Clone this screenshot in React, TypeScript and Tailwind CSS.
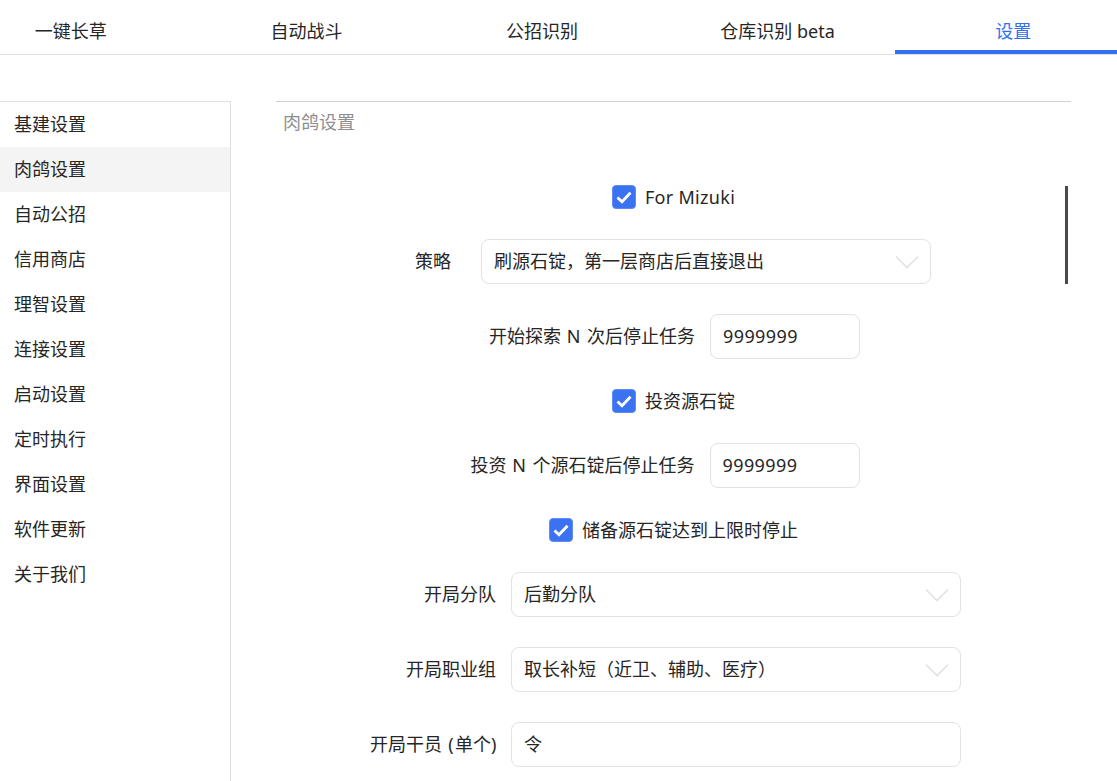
const font = 'font-["Noto_Sans","Noto_Sans_CJK_SC",sans-serif]';

const tabs = ["一键长草", "自动战斗", "公招识别", "仓库识别 beta", "设置"];
const menu = ["基建设置", "肉鸽设置", "自动公招", "信用商店", "理智设置", "连接设置", "启动设置", "定时执行", "界面设置", "软件更新", "关于我们"];

function Check({ label, wide }: { label: string; wide?: boolean }) {
  return (
    <div className="flex h-6 items-center gap-[9px]">
      <span className="flex h-6 w-6 items-center justify-center rounded border border-[#5f8cf6] bg-[#3b72f2]">
        <svg width="22" height="22" viewBox="0 0 22 22" fill="none">
          <path d="M4.5 11.5 9 15.8 17.5 6.8" stroke="#fff" strokeWidth="2.8" />
        </svg>
      </span>
      <span className={wide ? "tracking-[0.3px]" : ""}>{label}</span>
    </div>
  );
}

function Box({ value, width, select, num }: { value: string; width: string; select?: boolean; num?: boolean }) {
  return (
    <div className={`flex h-[45px] items-center justify-between rounded-lg border border-[#e2e2e2] pr-[11px] ${num ? "pl-[12px]" : "pl-3"} ${width}`}>
      <span className={`mb-[2px] ${num ? "tracking-[0.4px]" : ""}`}>{value}</span>
      {select && (
        <svg width="24" height="14" viewBox="0 0 24 14" fill="none">
          <path d="M1 1.5 12 12.5 23 1.5" stroke="#e2e2e2" strokeWidth="1.6" />
        </svg>
      )}
    </div>
  );
}

export default function App() {
  return (
    <div className={`h-[781px] w-[1117px] overflow-hidden bg-white text-[18px] leading-none text-[#262626] ${font}`}>
      <div className="flex h-[55px] overflow-hidden border-b border-[#e0e0e0]">
        <div className="-ml-[47px] flex shrink-0">
          {tabs.map((t, i) => (
            <div
              key={t}
              className={`flex h-[54px] w-[235.6px] shrink-0 items-center justify-center ${i === 4 ? "border-b-4 border-[#3370f0] pt-[12px] text-[#3370f0]" : "pt-[7px]"}`}
            >
              {t}
            </div>
          ))}
        </div>
      </div>
      <div className="mt-[46px] flex gap-[45px]">
        <div className="h-[680px] w-[231px] shrink-0 border-t border-r border-[#e0e0e0]">
          {menu.map((m, i) => (
            <div key={m} className={`flex h-[45px] items-center pb-[2px] pl-[14px] ${i === 1 ? "bg-[#f4f4f4]" : ""}`}>
              {m}
            </div>
          ))}
        </div>
        <div className="relative h-[680px] w-[795px] shrink-0 border-t border-[#d0d0d0]">
          <div className="flex h-[41px] items-center pb-[2px] pl-[7px] text-[#8f8f8f]">肉鸽设置</div>
          <div className="absolute right-[3px] top-[84px] h-[98px] w-[3px] bg-[#4a4a4a]" />
          <div className="mt-[42px] flex flex-col items-center gap-[30px]">
            <Check label="For Mizuki" wide />
            <div className="flex items-center gap-[30px] pr-[1px]">
              <span className="mb-[2px]">策略</span>
              <Box value="刷源石锭，第一层商店后直接退出" width="w-[450px]" select />
            </div>
            <div className="flex items-center gap-[15px] pl-[2px]">
              <span className="mb-[2px]">开始探索<span className="tracking-[1px]"> N </span>次后停止任务</span>
              <Box value="9999999" width="w-[150px]" num />
            </div>
            <Check label="投资源石锭" />
            <div className="flex items-center gap-[15px] pr-[17px]">
              <span className="mb-[2px]">投资<span className="tracking-[1px]"> N </span>个源石锭后停止任务</span>
              <Box value="9999999" width="w-[150px]" num />
            </div>
            <Check label="储备源石锭达到上限时停止" />
            <div className="flex items-center gap-[15px] pr-[16px]">
              <span className="mb-[2px] w-[126px] text-right">开局分队</span>
              <Box value="后勤分队" width="w-[450px]" select />
            </div>
            <div className="flex items-center gap-[15px] pr-[16px]">
              <span className="mb-[2px] w-[126px] text-right">开局职业组</span>
              <Box value="取长补短（近卫、辅助、医疗）" width="w-[450px]" select />
            </div>
            <div className="flex items-center gap-[15px] pr-[16px]">
              <span className="mb-[2px] w-[126px] whitespace-nowrap text-right">开局干员<span className="tracking-[1.5px]"> (</span>单个<span className="tracking-[1px]">)</span></span>
              <Box value="令" width="w-[450px]" />
            </div>
          </div>
        </div>
      </div>
    </div>
  );
}
